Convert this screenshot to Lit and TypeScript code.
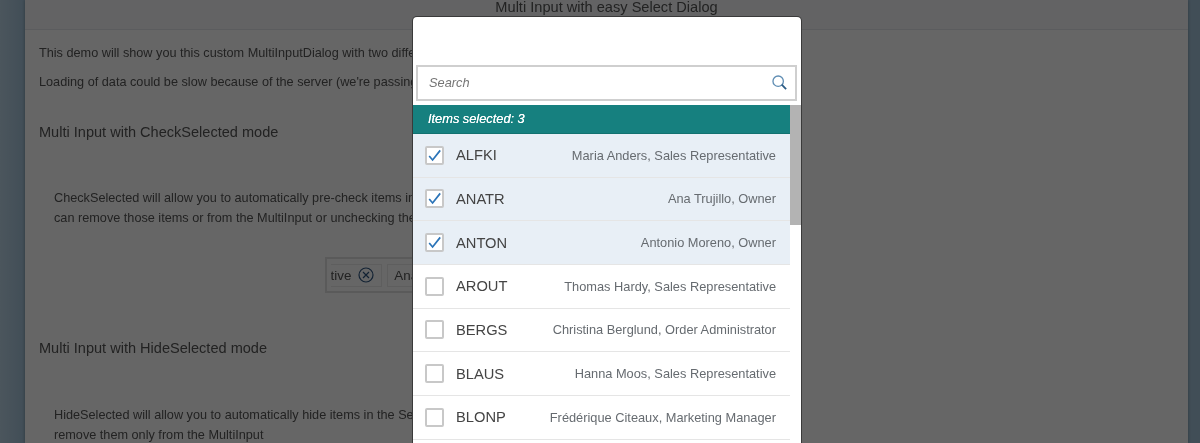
import { LitElement, html, css } from "lit";
import { customElement } from "lit/decorators.js";

const rows = [
  ["ALFKI", "Maria Anders, Sales Representative", true],
  ["ANATR", "Ana Trujillo, Owner", true],
  ["ANTON", "Antonio Moreno, Owner", true],
  ["AROUT", "Thomas Hardy, Sales Representative", false],
  ["BERGS", "Christina Berglund, Order Administrator", false],
  ["BLAUS", "Hanna Moos, Sales Representative", false],
  ["BLONP", "Frédérique Citeaux, Marketing Manager", false],
  ["BOLID", "Martín Sommer, Owner", false],
] as const;

@customElement("app-root")
export class AppRoot extends LitElement {
  static styles = css`
    :host {
      display: block;
      position: relative;
      height: 443px;
      overflow: hidden;
      font-family: "Liberation Sans", Arial, sans-serif;
      color: #555;
      filter: blur(0.3px);
    }
    .shell {
      display: flex;
      height: 443px;
      background: linear-gradient(90deg, #bcd6e8 0, #a3c2d9 25px);
      padding: 0 12px 0 25px;
      box-sizing: border-box;
    }
    .panel {
      flex: 1;
      min-width: 0;
      background: #fff;
      overflow: hidden;
      box-shadow: 0 0 3px rgba(0, 0, 0, 0.3);
    }
    .header {
      height: 30px;
      box-sizing: border-box;
      background: #f7f8fa;
      border-bottom: 1px solid #e3e6ea;
      text-align: center;
      font-size: 14.6px;
      line-height: 15px;
    }
    .content {
      padding: 14.5px 14px 0;
      font-size: 12.7px;
    }
    .lead {
      margin: 0;
      height: 29px;
      line-height: 16px;
      white-space: nowrap;
    }
    h2 {
      margin: 0;
      font-weight: 400;
      font-size: 14.55px;
      line-height: 18px;
      white-space: nowrap;
    }
    .first {
      margin-top: 20px;
    }
    .second {
      margin-top: 46px;
    }
    .note {
      margin: 47px 0 0 15px;
      line-height: 20px;
      white-space: nowrap;
    }
    .second + .note {
      margin-top: 48px;
    }
    .tokens {
      margin: 29px 0 0 285.5px;
      width: 440px;
      height: 36.5px;
      box-sizing: border-box;
      border: 2px solid #e0e0e0;
      border-right: 0;
      padding: 5px 0 0 4px;
      display: flex;
    }
    .clip {
      display: flex;
      gap: 5px;
      overflow: hidden;
      height: 23px;
      width: 400px;
    }
    .token {
      flex: none;
      display: flex;
      align-items: center;
      gap: 7px;
      height: 23px;
      box-sizing: border-box;
      border: 1px solid #ececec;
      padding: 0 7px 0 6px;
      font-size: 13.4px;
    }
    .token.cut {
      border-left: 0;
      padding-left: 0;
    }
    .x {
      width: 16px;
      height: 16px;
      display: block;
    }
    .shade {
      position: absolute;
      inset: 0;
      background: rgba(0, 0, 0, 0.6);
    }
    .dialog {
      position: absolute;
      left: 413px;
      top: 17px;
      width: 388px;
      height: 440px;
      background: #fff;
      border-radius: 4px;
      box-shadow: 0 0 0 1px #3a3a3a;
      display: flex;
      flex-direction: column;
    }
    .search {
      flex: none;
      margin: 47.5px 4px 0 3px;
      height: 36.5px;
      box-sizing: border-box;
      border: 2px solid #cfcfcf;
      display: flex;
      align-items: center;
      justify-content: space-between;
      padding: 0 8px 0 11px;
      font-size: 12.8px;
      font-style: italic;
      color: #757575;
    }
    .glass {
      width: 15px;
      height: 15px;
      display: block;
    }
    .scroller {
      margin-top: 4px;
      flex: 1;
      min-height: 0;
      display: flex;
      overflow: hidden;
    }
    .list {
      width: 377px;
      flex: none;
    }
    .bar {
      width: 11px;
      flex: none;
    }
    .thumb {
      height: 120px;
      background: #b3b3b3;
    }
    .count {
      height: 29px;
      box-sizing: border-box;
      background: #16807f;
      border-bottom: 1px solid #127170;
      color: #fff;
      font-size: 12.8px;
      font-style: italic;
      line-height: 28px;
      padding-left: 15px;
      text-shadow: 0 0 0.3px #fff;
    }
    .row {
      height: 43.67px;
      box-sizing: border-box;
      border-bottom: 1px solid #e5e5e5;
      display: flex;
      align-items: center;
      padding: 0 14px 0 12px;
    }
    .row.on {
      background: #e8eff6;
    }
    .box {
      flex: none;
      width: 19px;
      height: 19px;
      box-sizing: border-box;
      border: 2px solid #c8c8c8;
      border-radius: 2px;
      background: #fff;
      margin-right: 12px;
    }
    .box svg {
      width: 15px;
      height: 15px;
      display: block;
    }
    .code {
      flex: 1;
      font-size: 14.7px;
      color: #444;
    }
    .desc {
      font-size: 12.8px;
      color: #666b70;
      white-space: nowrap;
    }
  `;

  render() {
    return html`
      <div class="shell">
        <div class="panel">
          <div class="header">Multi Input with easy Select Dialog</div>
          <div class="content">
            <p class="lead">This demo will show you this custom MultiInputDialog with two different modes</p>
            <p class="lead">Loading of data could be slow because of the server (we're passing through a proxy)</p>
            <h2 class="first">Multi Input with CheckSelected mode</h2>
            <p class="note">
              CheckSelected will allow you to automatically pre-check items in the SelectDialog. You<br />
              can remove those items or from the MultiInput or unchecking them
            </p>
            <div class="tokens">
              <div class="clip">
                <div class="token cut">
                  tive
                  <svg class="x" viewBox="0 0 16 16" fill="none" stroke="#2f5680" stroke-width="1.2">
                    <circle cx="8" cy="8" r="7" />
                    <path d="M5 5l6 6M11 5l-6 6" />
                  </svg>
                </div>
                <div class="token">Ana Trujillo, Owner</div>
              </div>
            </div>
            <h2 class="second">Multi Input with HideSelected mode</h2>
            <p class="note">
              HideSelected will allow you to automatically hide items in the SelectDialog. You can<br />
              remove them only from the MultiInput
            </p>
          </div>
        </div>
      </div>
      <div class="shade"></div>
      <div class="dialog">
        <div class="search">
          Search
          <svg class="glass" viewBox="0 0 17 17" fill="none">
            <circle cx="7" cy="7" r="5.9" stroke="#5f8db3" stroke-width="1.5" />
            <path d="M11 11l5 5" stroke="#2a5b84" stroke-width="2" />
          </svg>
        </div>
        <div class="scroller">
          <div class="list">
            <div class="count">Items selected: 3</div>
            ${rows.map(
              ([code, desc, on]) => html`
                <div class="row ${on ? "on" : ""}">
                  <div class="box">
                    ${on
                      ? html`<svg viewBox="0 0 15 15" fill="none">
                          <path d="M2.2 8l3.4 4 7.6-9.6" stroke="#2b74b8" stroke-width="1.7" />
                        </svg>`
                      : ""}
                  </div>
                  <span class="code">${code}</span>
                  <span class="desc">${desc}</span>
                </div>
              `,
            )}
          </div>
          <div class="bar"><div class="thumb"></div></div>
        </div>
      </div>
    `;
  }
}
